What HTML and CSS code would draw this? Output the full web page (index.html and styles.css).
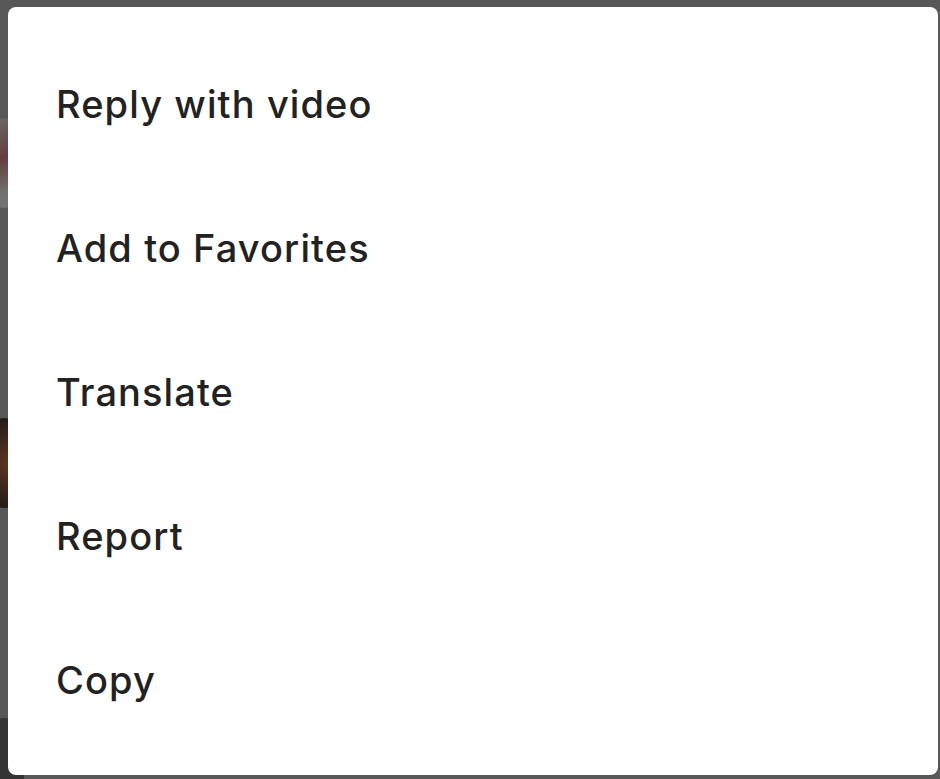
FILE: index.html
```html
<!DOCTYPE html>
<html lang="en">
<head>
<meta charset="utf-8">
<title>Menu</title>
<link rel="stylesheet" href="styles.css">
</head>
<body>
<div class="page">
  <div class="feed">
    <div class="thumb thumb-red"></div>
    <div class="thumb thumb-orange"></div>
    <div class="thumb thumb-dark"></div>
  </div>
  <div class="scrim"></div>
  <div class="sheet" role="menu">
    <div class="item" role="menuitem">Reply with video</div>
    <div class="item" role="menuitem">Add to Favorites</div>
    <div class="item" role="menuitem">Translate</div>
    <div class="item" role="menuitem">Report</div>
    <div class="item" role="menuitem">Copy</div>
  </div>
</div>
</body>
</html>
```
FILE: styles.css
```css
html, body {
  margin: 0;
  padding: 0;
  height: 100%;
  overflow: hidden;
}
body {
  background: #5b5b5b;
  font-family: Inter, "Open Sans", sans-serif;
}
.page {
  position: relative;
  width: 940px;
  height: 779px;
}
.feed {
  display: flex;
  flex-direction: column;
  padding-top: 118px;
  gap: 210px;
  width: 40px;
}
.thumb {
  width: 40px;
  height: 90px;
  border-radius: 45px;
  margin-left: -16px;
}
.thumb-red {
  background: linear-gradient(160deg, #8a8a8a 0%, #7a1c1c 45%, #9a9a9a 80%);
  opacity: 0.6;
}
.thumb-orange {
  background: radial-gradient(circle at 70% 50%, #6a2a0a 0%, #2a1208 60%, #000 100%);
}
.thumb-dark {
  background: #2a2a2a;
}
.scrim {
  position: absolute;
  inset: 0;
  background: rgba(80, 80, 80, 0.3);
}
.sheet {
  position: absolute;
  top: 7px;
  left: 8px;
  width: 930px;
  height: 768px;
  box-sizing: border-box;
  background: #ffffff;
  border-radius: 8px;
  padding: 25px 0 23px 48px;
  display: flex;
  flex-direction: column;
}
.item {
  height: 144px;
  display: flex;
  align-items: center;
  font-size: 38px;
  font-weight: 500;
  color: #222222;
  letter-spacing: 1.1px;
}
```
